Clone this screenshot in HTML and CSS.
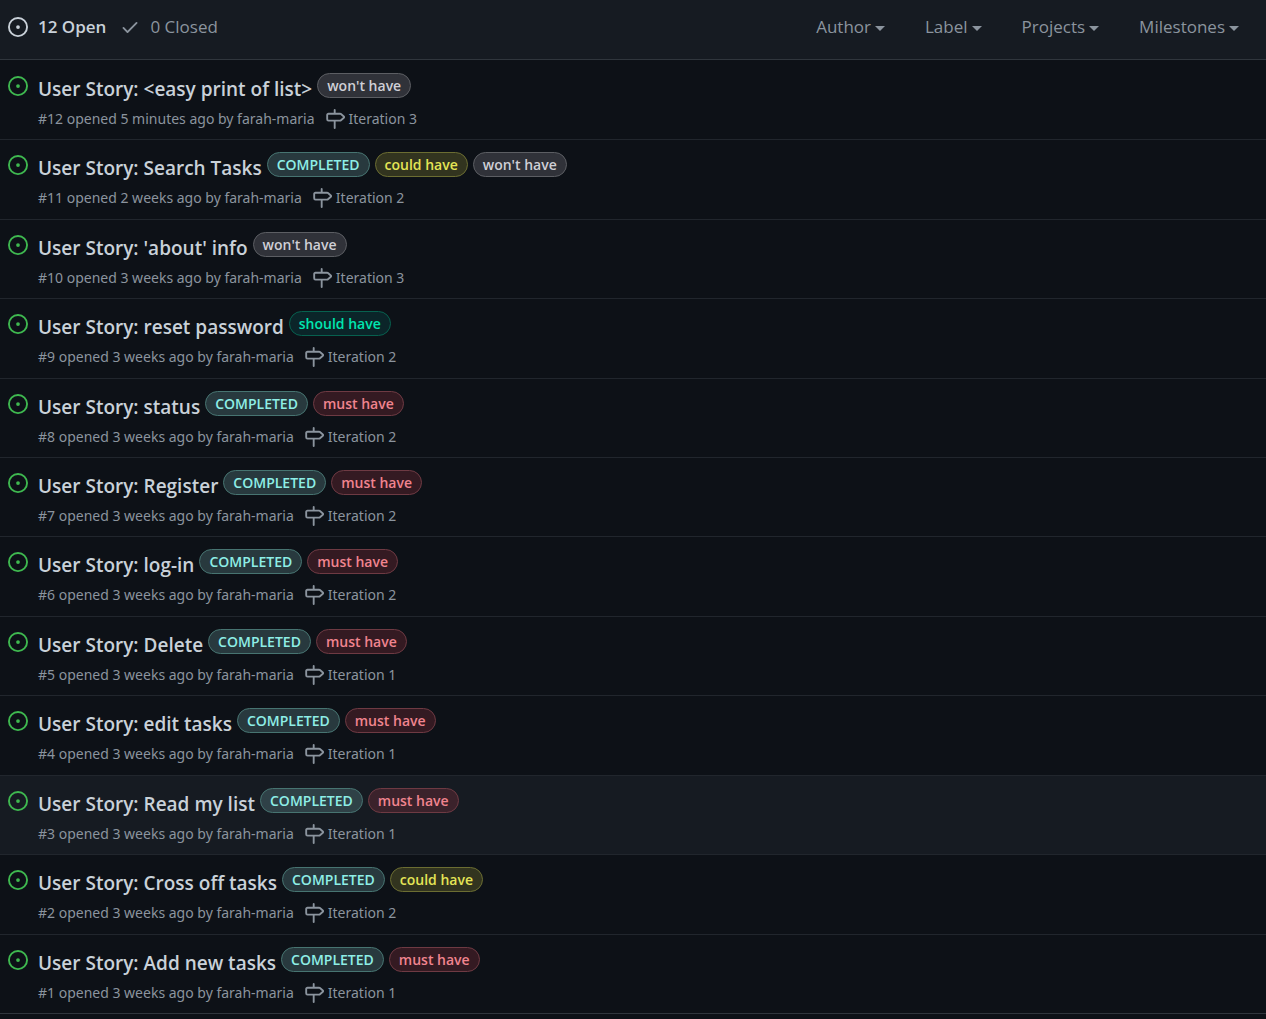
FILE: index.html
```html
<!DOCTYPE html>
<html lang="en">
<head>
<meta charset="utf-8">
<meta name="viewport" content="width=device-width, initial-scale=1">
<title>Issues</title>
<link rel="stylesheet" href="styles.css">
</head>
<body>
<svg class="sprite" aria-hidden="true">
  <symbol id="opened" viewBox="0 0 16 16"><path d="M8 9.5a1.5 1.5 0 1 0 0-3 1.5 1.5 0 0 0 0 3Z"/><path d="M8 0a8 8 0 1 1 0 16A8 8 0 0 1 8 0ZM1.5 8a6.5 6.5 0 1 0 13 0 6.5 6.5 0 0 0-13 0Z"/></symbol>
  <symbol id="check" viewBox="0 0 16 16"><path d="M13.78 4.22a.75.75 0 0 1 0 1.06l-7.25 7.25a.75.75 0 0 1-1.06 0L2.22 9.28a.75.75 0 0 1 1.06-1.06L6 10.94l6.72-6.72a.75.75 0 0 1 1.06 0Z"/></symbol>
  <symbol id="milestone" viewBox="0 0 16 16"><path d="M7.75 0a.75.75 0 0 1 .75.75V3h3.634c.414 0 .814.147 1.13.414l2.07 1.75a1.75 1.75 0 0 1 0 2.672l-2.07 1.75a1.75 1.75 0 0 1-1.13.414H8.5v5.25a.75.75 0 0 1-1.5 0V10H2.75A1.75 1.75 0 0 1 1 8.25v-3.5C1 3.784 1.784 3 2.75 3H7V.75A.75.75 0 0 1 7.75 0Zm4.384 8.5a.25.25 0 0 0 .161-.06l2.07-1.75a.248.248 0 0 0 0-.38l-2.07-1.75a.25.25 0 0 0-.161-.06H2.75a.25.25 0 0 0-.25.25v3.5c0 .138.112.25.25.25h9.384Z"/></symbol>
</svg>
<header class="toolbar">
  <nav class="states" aria-label="Issue state">
    <a class="state current" href="#open"><svg class="icon"><use href="#opened"/></svg>12 Open</a>
    <a class="state" href="#closed"><svg class="icon"><use href="#check"/></svg>0 Closed</a>
  </nav>
  <div class="filters">
    <button class="filter" type="button">Author</button>
    <button class="filter" type="button">Label</button>
    <button class="filter" type="button">Projects</button>
    <button class="filter" type="button">Milestones</button>
  </div>
</header>
<main class="issues">
  <article class="issue"><svg class="icon open"><use href="#opened"/></svg><div class="body">
    <div class="heading"><a class="title" href="#12">User Story: &lt;easy print of list&gt;</a><a class="label wont" href="#wont">won't have</a></div>
    <div class="meta"><span>#12 opened 5 minutes ago by <a href="#author">farah-maria</a></span><a class="milestone" href="#m3"><svg class="icon"><use href="#milestone"/></svg>Iteration 3</a></div>
  </div></article>
  <article class="issue"><svg class="icon open"><use href="#opened"/></svg><div class="body">
    <div class="heading"><a class="title" href="#11">User Story: Search Tasks</a><a class="label completed" href="#completed">COMPLETED</a><a class="label could" href="#could">could have</a><a class="label wont" href="#wont">won't have</a></div>
    <div class="meta"><span>#11 opened 2 weeks ago by <a href="#author">farah-maria</a></span><a class="milestone" href="#m2"><svg class="icon"><use href="#milestone"/></svg>Iteration 2</a></div>
  </div></article>
  <article class="issue"><svg class="icon open"><use href="#opened"/></svg><div class="body">
    <div class="heading"><a class="title" href="#10">User Story: 'about' info</a><a class="label wont" href="#wont">won't have</a></div>
    <div class="meta"><span>#10 opened 3 weeks ago by <a href="#author">farah-maria</a></span><a class="milestone" href="#m3"><svg class="icon"><use href="#milestone"/></svg>Iteration 3</a></div>
  </div></article>
  <article class="issue"><svg class="icon open"><use href="#opened"/></svg><div class="body">
    <div class="heading"><a class="title" href="#9">User Story: reset password</a><a class="label should" href="#should">should have</a></div>
    <div class="meta"><span>#9 opened 3 weeks ago by <a href="#author">farah-maria</a></span><a class="milestone" href="#m2"><svg class="icon"><use href="#milestone"/></svg>Iteration 2</a></div>
  </div></article>
  <article class="issue"><svg class="icon open"><use href="#opened"/></svg><div class="body">
    <div class="heading"><a class="title" href="#8">User Story: status</a><a class="label completed" href="#completed">COMPLETED</a><a class="label must" href="#must">must have</a></div>
    <div class="meta"><span>#8 opened 3 weeks ago by <a href="#author">farah-maria</a></span><a class="milestone" href="#m2"><svg class="icon"><use href="#milestone"/></svg>Iteration 2</a></div>
  </div></article>
  <article class="issue"><svg class="icon open"><use href="#opened"/></svg><div class="body">
    <div class="heading"><a class="title" href="#7">User Story: Register</a><a class="label completed" href="#completed">COMPLETED</a><a class="label must" href="#must">must have</a></div>
    <div class="meta"><span>#7 opened 3 weeks ago by <a href="#author">farah-maria</a></span><a class="milestone" href="#m2"><svg class="icon"><use href="#milestone"/></svg>Iteration 2</a></div>
  </div></article>
  <article class="issue"><svg class="icon open"><use href="#opened"/></svg><div class="body">
    <div class="heading"><a class="title" href="#6">User Story: log-in</a><a class="label completed" href="#completed">COMPLETED</a><a class="label must" href="#must">must have</a></div>
    <div class="meta"><span>#6 opened 3 weeks ago by <a href="#author">farah-maria</a></span><a class="milestone" href="#m2"><svg class="icon"><use href="#milestone"/></svg>Iteration 2</a></div>
  </div></article>
  <article class="issue"><svg class="icon open"><use href="#opened"/></svg><div class="body">
    <div class="heading"><a class="title" href="#5">User Story: Delete</a><a class="label completed" href="#completed">COMPLETED</a><a class="label must" href="#must">must have</a></div>
    <div class="meta"><span>#5 opened 3 weeks ago by <a href="#author">farah-maria</a></span><a class="milestone" href="#m1"><svg class="icon"><use href="#milestone"/></svg>Iteration 1</a></div>
  </div></article>
  <article class="issue"><svg class="icon open"><use href="#opened"/></svg><div class="body">
    <div class="heading"><a class="title" href="#4">User Story: edit tasks</a><a class="label completed" href="#completed">COMPLETED</a><a class="label must" href="#must">must have</a></div>
    <div class="meta"><span>#4 opened 3 weeks ago by <a href="#author">farah-maria</a></span><a class="milestone" href="#m1"><svg class="icon"><use href="#milestone"/></svg>Iteration 1</a></div>
  </div></article>
  <article class="issue active"><svg class="icon open"><use href="#opened"/></svg><div class="body">
    <div class="heading"><a class="title" href="#3">User Story: Read my list</a><a class="label completed" href="#completed">COMPLETED</a><a class="label must" href="#must">must have</a></div>
    <div class="meta"><span>#3 opened 3 weeks ago by <a href="#author">farah-maria</a></span><a class="milestone" href="#m1"><svg class="icon"><use href="#milestone"/></svg>Iteration 1</a></div>
  </div></article>
  <article class="issue"><svg class="icon open"><use href="#opened"/></svg><div class="body">
    <div class="heading"><a class="title" href="#2">User Story: Cross off tasks</a><a class="label completed" href="#completed">COMPLETED</a><a class="label could" href="#could">could have</a></div>
    <div class="meta"><span>#2 opened 3 weeks ago by <a href="#author">farah-maria</a></span><a class="milestone" href="#m2"><svg class="icon"><use href="#milestone"/></svg>Iteration 2</a></div>
  </div></article>
  <article class="issue"><svg class="icon open"><use href="#opened"/></svg><div class="body">
    <div class="heading"><a class="title" href="#1">User Story: Add new tasks</a><a class="label completed" href="#completed">COMPLETED</a><a class="label must" href="#must">must have</a></div>
    <div class="meta"><span>#1 opened 3 weeks ago by <a href="#author">farah-maria</a></span><a class="milestone" href="#m1"><svg class="icon"><use href="#milestone"/></svg>Iteration 1</a></div>
  </div></article>
</main>
</body>
</html>
```
FILE: styles.css
```css
* { box-sizing: border-box; }

body {
  display: flex;
  flex-direction: column;
  min-height: 100vh;
  margin: 0;
  padding-bottom: 5px;
  background: #0d1117;
  color: #8b949e;
  font-family: "Open Sans", "Noto Sans", sans-serif;
  font-size: 14px;
}

a { color: inherit; text-decoration: none; }

.sprite { display: none; }

.icon {
  flex: none;
  width: 20px;
  height: 20px;
  fill: currentColor;
}

.toolbar {
  display: flex;
  justify-content: space-between;
  align-items: flex-start;
  height: 60px;
  padding: 15px 27px 0 8px;
  background: #161b22;
  border-bottom: 1px solid #30363d;
  font-size: 17px;
  line-height: 24px;
}

.states { display: flex; gap: 14px; }

.state { display: flex; align-items: center; gap: 10px; }

.current { color: #c9d1d9; font-weight: 600; }

.filters { display: flex; gap: 40px; }

.filter {
  display: flex;
  align-items: center;
  gap: 4px;
  padding: 0;
  border: 0;
  background: none;
  color: inherit;
  font: inherit;
}

.filter::after {
  content: "";
  margin-top: 3px;
  border: 5px solid transparent;
  border-top-color: currentColor;
  border-bottom: 0;
}

.issues {
  flex: 1;
  display: grid;
  grid-auto-rows: 1fr;
  border-bottom: 1px solid #30363d;
}

.issue {
  display: flex;
  gap: 10px;
  padding: 15px 20px 0 8px;
  border-top: 1px solid #21262d;
}

.issue:first-child { border-top-color: transparent; }

.active { background: #161b22; }

.open { color: #3fb950; }

.heading {
  display: flex;
  align-items: flex-start;
  gap: 5px;
  margin-top: -3px;
}

.title {
  color: #c9d1d9;
  font-size: 19px;
  font-weight: 600;
  line-height: 32px;
}

.label {
  padding: 0 9px;
  border: 1px solid;
  border-radius: 13px;
  font-size: 14px;
  font-weight: 600;
  line-height: 23px;
}

.meta {
  display: flex;
  gap: 10px;
  margin-top: 2px;
  font-family: "Noto Sans", "Open Sans", sans-serif;
  line-height: 24px;
}

.milestone { display: flex; align-items: center; gap: 4px; }

.completed { color: #8eeee6; background: #28393e; border-color: #477471; }
.could { color: #e4e456; background: #32341f; border-color: #6b6d32; }
.wont { color: #cfcfd6; background: #303239; border-color: #5c5e63; }
.should { color: #00e6b0; background: #0b2529; border-color: #07614f; }
.must { color: #f0848f; background: #341a22; border-color: #6e3a43; }
.active .completed { background: #2f4147; }
.active .must { background: #3b222b; }
```
